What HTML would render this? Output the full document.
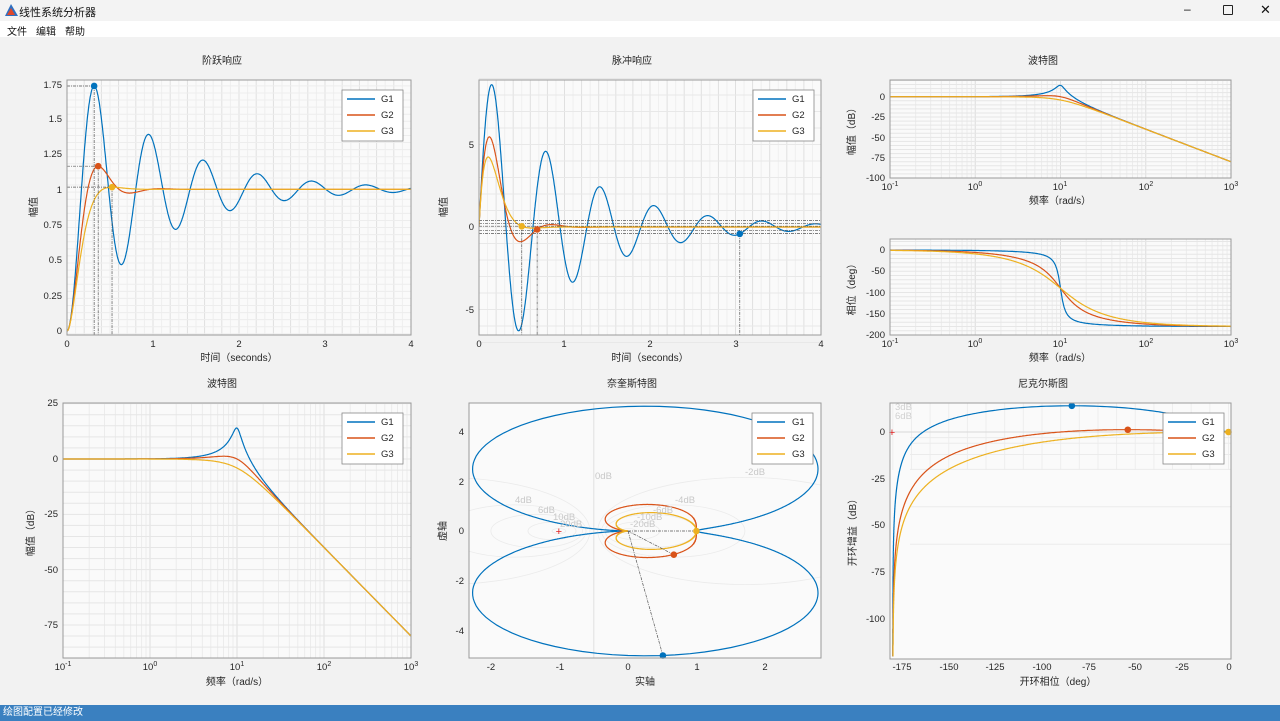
<!DOCTYPE html>
<html><head><meta charset="utf-8">
<style>
html,body{margin:0;padding:0;width:1280px;height:721px;overflow:hidden;background:#f2f2f2;font-family:"Liberation Sans","Noto Sans CJK SC",sans-serif;}
#tb{position:absolute;left:0;top:0;width:1280px;height:21px;background:#f3f3f3;font-size:11px;color:#111;}
#mb{position:absolute;left:0;top:21px;width:1280px;height:16px;background:#fff;font-size:10px;color:#111;}
#sb{position:absolute;left:0;top:705px;width:1280px;height:16px;background:#3a80c0;color:#fff;font-size:10px;line-height:16px;padding-left:3px;box-sizing:border-box;}
svg{position:absolute;left:0;top:0}
text{font-family:"Liberation Sans","Noto Sans CJK SC",sans-serif;fill:#262626;font-size:9.5px}
.r{text-anchor:end}.m{text-anchor:middle}
.t{font-size:10px}
</style></head><body>
<div id="tb">
<svg width="16" height="16" style="left:4px;top:3px"><path d="M7 1 L14 13 L1 13 Z" fill="#2f6fc0"/><path d="M7 5 L11 12 L3 12Z" fill="#e0482a"/></svg>
<span style="position:absolute;left:19px;top:4px">线性系统分析器</span>
<span style="position:absolute;left:1184px;top:2px;font-size:12px">&#8211;</span>
<span style="position:absolute;left:1223px;top:5px;width:8px;height:8px;border:1px solid #222;border-radius:1px"></span>
<span style="position:absolute;left:1260px;top:2px;font-size:13px">&#10005;</span>
</div>
<div id="mb"><span style="position:absolute;left:7px;top:2px">文件</span><span style="position:absolute;left:36px;top:2px">编辑</span><span style="position:absolute;left:65px;top:2px">帮助</span></div>
<div id="sb">绘图配置已经修改</div>

<svg width="1280" height="705" viewBox="0 0 1280 705" style="top:0">
<defs>
<clipPath id="c1"><rect x="67" y="80" width="344" height="255"/></clipPath>
<clipPath id="c2"><rect x="479" y="80" width="342" height="255"/></clipPath>
<clipPath id="c3"><rect x="890" y="80" width="341" height="98"/></clipPath>
<clipPath id="c4"><rect x="890" y="239" width="341" height="96"/></clipPath>
<clipPath id="c5"><rect x="63" y="403" width="348" height="255"/></clipPath>
<clipPath id="c6"><rect x="469" y="403" width="352" height="255"/></clipPath>
<clipPath id="c7"><rect x="890" y="403" width="341" height="256"/></clipPath>
</defs>
<g id="plots"></g>

<text class="m t" x="222" y="64">阶跃响应</text>
<text class="m t" x="632" y="64">脉冲响应</text>
<text class="m t" x="1043" y="64">波特图</text>
<text class="m t" x="222" y="387">波特图</text>
<text class="m t" x="632" y="387">奈奎斯特图</text>
<text class="m t" x="1043" y="387">尼克尔斯图</text>
<text class="m t" x="239" y="361">时间（seconds）</text>
<text class="m t" x="650" y="361">时间（seconds）</text>
<text class="m t" x="1060" y="204">频率（rad/s）</text>
<text class="m t" x="1060" y="361">频率（rad/s）</text>
<text class="m t" x="237" y="685">频率（rad/s）</text>
<text class="m t" x="645" y="685">实轴</text>
<text class="m t" x="1058" y="685">开环相位（deg）</text>
<text class="m t" transform="translate(37,207) rotate(-90)">幅值</text>
<text class="m t" transform="translate(447,207) rotate(-90)">幅值</text>
<text class="m t" transform="translate(855,129) rotate(-90)">幅值（dB）</text>
<text class="m t" transform="translate(855,287) rotate(-90)">相位（deg）</text>
<text class="m t" transform="translate(34,530) rotate(-90)">幅值（dB）</text>
<text class="m t" transform="translate(446,531) rotate(-90)">虚轴</text>
<text class="m t" transform="translate(856,530) rotate(-90)">开环增益（dB）</text>

<text class="r" x="62" y="88">1.75</text><text class="r" x="62" y="122">1.5</text><text class="r" x="62" y="157">1.25</text><text class="r" x="62" y="193">1</text><text class="r" x="62" y="228">0.75</text><text class="r" x="62" y="263">0.5</text><text class="r" x="62" y="299">0.25</text><text class="r" x="62" y="334">0</text>
<text class="m" x="67" y="347">0</text><text class="m" x="153" y="347">1</text><text class="m" x="239" y="347">2</text><text class="m" x="325" y="347">3</text><text class="m" x="411" y="347">4</text>
<text class="r" x="474" y="148">5</text><text class="r" x="474" y="230">0</text><text class="r" x="474" y="313">-5</text>
<text class="m" x="479" y="347">0</text><text class="m" x="564" y="347">1</text><text class="m" x="650" y="347">2</text><text class="m" x="736" y="347">3</text><text class="m" x="821" y="347">4</text>
<text class="r" x="885" y="100">0</text><text class="r" x="885" y="120">-25</text><text class="r" x="885" y="141">-50</text><text class="r" x="885" y="161">-75</text><text class="r" x="885" y="181">-100</text>
<text class="m" x="890" y="190">10<tspan dy="-4" font-size="7">-1</tspan></text><text class="m" x="975" y="190">10<tspan dy="-4" font-size="7">0</tspan></text><text class="m" x="1060" y="190">10<tspan dy="-4" font-size="7">1</tspan></text><text class="m" x="1146" y="190">10<tspan dy="-4" font-size="7">2</tspan></text><text class="m" x="1231" y="190">10<tspan dy="-4" font-size="7">3</tspan></text>
<text class="r" x="885" y="253">0</text><text class="r" x="885" y="274">-50</text><text class="r" x="885" y="296">-100</text><text class="r" x="885" y="317">-150</text><text class="r" x="885" y="338">-200</text>
<text class="m" x="890" y="347">10<tspan dy="-4" font-size="7">-1</tspan></text><text class="m" x="975" y="347">10<tspan dy="-4" font-size="7">0</tspan></text><text class="m" x="1060" y="347">10<tspan dy="-4" font-size="7">1</tspan></text><text class="m" x="1146" y="347">10<tspan dy="-4" font-size="7">2</tspan></text><text class="m" x="1231" y="347">10<tspan dy="-4" font-size="7">3</tspan></text>
<text class="r" x="58" y="406">25</text><text class="r" x="58" y="462">0</text><text class="r" x="58" y="517">-25</text><text class="r" x="58" y="573">-50</text><text class="r" x="58" y="628">-75</text>
<text class="m" x="63" y="670">10<tspan dy="-4" font-size="7">-1</tspan></text><text class="m" x="150" y="670">10<tspan dy="-4" font-size="7">0</tspan></text><text class="m" x="237" y="670">10<tspan dy="-4" font-size="7">1</tspan></text><text class="m" x="324" y="670">10<tspan dy="-4" font-size="7">2</tspan></text><text class="m" x="411" y="670">10<tspan dy="-4" font-size="7">3</tspan></text>
<text class="r" x="464" y="435">4</text><text class="r" x="464" y="485">2</text><text class="r" x="464" y="534">0</text><text class="r" x="464" y="584">-2</text><text class="r" x="464" y="634">-4</text>
<text class="m" x="491" y="670">-2</text><text class="m" x="560" y="670">-1</text><text class="m" x="628" y="670">0</text><text class="m" x="697" y="670">1</text><text class="m" x="765" y="670">2</text>
<text x="595" y="479" style="fill:#c8c8c8">0dB</text><text x="745" y="475" style="fill:#c8c8c8">-2dB</text><text x="515" y="503" style="fill:#c8c8c8">4dB</text><text x="675" y="503" style="fill:#c8c8c8">-4dB</text><text x="538" y="513" style="fill:#c8c8c8">6dB</text><text x="653" y="513" style="fill:#c8c8c8">-6dB</text><text x="553" y="520" style="fill:#c8c8c8">10dB</text><text x="637" y="520" style="fill:#c8c8c8">-10dB</text><text x="560" y="527" style="fill:#c8c8c8">20dB</text><text x="630" y="527" style="fill:#c8c8c8">-20dB</text>
<text class="r" x="885" y="435">0</text><text class="r" x="885" y="482">-25</text><text class="r" x="885" y="528">-50</text><text class="r" x="885" y="575">-75</text><text class="r" x="885" y="622">-100</text>
<text class="m" x="902" y="670">-175</text><text class="m" x="949" y="670">-150</text><text class="m" x="995" y="670">-125</text><text class="m" x="1042" y="670">-100</text><text class="m" x="1089" y="670">-75</text><text class="m" x="1135" y="670">-50</text><text class="m" x="1182" y="670">-25</text><text class="m" x="1229" y="670">0</text>
<text x="895" y="410" style="fill:#d0d0d0">3dB</text><text x="895" y="419" style="fill:#d0d0d0">6dB</text>

<g id="legends"></g>
<text x="381" y="102">G1</text><text x="381" y="118">G2</text><text x="381" y="134">G3</text>
<text x="792" y="102">G1</text><text x="792" y="118">G2</text><text x="792" y="134">G3</text>
<text x="381" y="425">G1</text><text x="381" y="441">G2</text><text x="381" y="457">G3</text>
<text x="792" y="425">G1</text><text x="792" y="441">G2</text><text x="792" y="457">G3</text>
<text x="1202" y="425">G1</text><text x="1202" y="441">G2</text><text x="1202" y="457">G3</text>
</svg>

<script>
var C=['#0072bd','#d95319','#edb120'],Z=[0.1,0.5,0.8],W=10;
var out='';
function box(x,y,w,h){out+='<rect x="'+x+'" y="'+y+'" width="'+w+'" height="'+h+'" fill="#fafafa"/>';}
function frame(x,y,w,h){out+='<rect x="'+x+'" y="'+y+'" width="'+w+'" height="'+h+'" fill="none" stroke="#9a9a9a" stroke-width="1"/>';}
function vl(x,y0,y1,c,w){out+='<line x1="'+x+'" x2="'+x+'" y1="'+y0+'" y2="'+y1+'" stroke="'+c+'" stroke-width="'+(w||1)+'"/>';}
function hl(y,x0,x1,c,w){out+='<line x1="'+x0+'" x2="'+x1+'" y1="'+y+'" y2="'+y+'" stroke="'+c+'" stroke-width="'+(w||1)+'"/>';}
function path(pts,c,clip,w){var d='';pts.forEach(function(p,i){d+=(i?'L':'M')+p[0].toFixed(1)+' '+p[1].toFixed(1)});out+='<path d="'+d+'" fill="none" stroke="'+c+'" stroke-width="'+(w||1.2)+'" clip-path="url(#'+clip+')"/>';}
function dot(x,y,c){out+='<circle cx="'+x+'" cy="'+y+'" r="3.3" fill="'+c+'"/>';}
function dash(x1,y1,x2,y2){out+='<line x1="'+x1+'" y1="'+y1+'" x2="'+x2+'" y2="'+y2+'" stroke="#555" stroke-width="0.7" stroke-dasharray="3,1,1,1"/>';}
function logGrid(x0,x1,y0,y1){var dec=(x1-x0)/4;for(var d=0;d<4;d++)for(var k=1;k<=9;k++){var x=x0+dec*(d+Math.log10(k));vl(x,y0,y1,k==1?'#dddddd':'#ececec');}}
function mag(z,w){var re=1-(w/W)*(w/W),im=2*z*w/W;return [re/(re*re+im*im),-im/(re*re+im*im)];}
box(67,80,344,255);
for(var t=0;t<=4.001;t+=0.1){vl(67+t*86,80,335,Math.abs(t*5-Math.round(t*5))<0.01?'#e0e0e0':'#efefef');}
for(var v=-0.02;v<=1.8;v+=0.05){var y=331-v*141.7;if(y>80&&y<335)hl(y,67,411,Math.abs(v*4-Math.round(v*4))<0.01?'#e2e2e2':'#ededed');}
function stepv(z,t){var wd=W*Math.sqrt(1-z*z);return 1-Math.exp(-z*W*t)/Math.sqrt(1-z*z)*Math.sin(wd*t+Math.acos(z));}
function imp(z,t){var wd=W*Math.sqrt(1-z*z);return W*W/wd*Math.exp(-z*W*t)*Math.sin(wd*t);}
var pk=[];
for(var i=0;i<3;i++){var p=[];for(var t=0;t<=4;t+=0.005)p.push([67+t*86,331-stepv(Z[i],t)*141.7]);var tp=Math.PI/(W*Math.sqrt(1-Z[i]*Z[i]));pk.push([67+tp*86,331-stepv(Z[i],tp)*141.7]);path(p,C[i],'c1');}
pk.forEach(function(q){dash(67,q[1],q[0],q[1]);dash(q[0],q[1],q[0],335);});
pk.forEach(function(q,i){dot(q[0],q[1],C[i]);});
frame(67,80,344,255);
box(479,80,342,255);
for(var t=0;t<=4.001;t+=0.1){vl(479+t*85.5,80,335,Math.abs(t*5-Math.round(t*5))<0.01?'#e0e0e0':'#efefef');}
for(var v=-7;v<=9;v+=1){hl(227-v*16.5,479,821,'#e8e8e8');}
var ip=[[3.05,C[0]],[0.68,C[1]],[0.5,C[2]]];
for(var i=0;i<3;i++){var p=[];for(var t=0;t<=4;t+=0.004)p.push([479+t*85.5,227-imp(Z[i],t)*16.5]);path(p,C[i],'c2');}
[0.4,-0.4,0.2,-0.2,0.05].forEach(function(a){dash(479,227-a*16.5,821,227-a*16.5);});
ip.forEach(function(a,i){var x=479+a[0]*85.5,y=227-imp(Z[i],a[0])*16.5;dash(x,y,x,335);dot(x,y,a[1]);});
frame(479,80,342,255);
function bode(x0,x1,ytop,ybot,y0,ps,clip,ph,yg){box(x0,ytop,x1-x0,ybot-ytop);logGrid(x0,x1,ytop,ybot);yg.forEach(function(g){hl(y0-g*ps,x0,x1,'#e6e6e6');});
for(var i=0;i<3;i++){var p=[];for(var e=-1;e<=3;e+=0.005){var w=Math.pow(10,e),g=mag(Z[i],w),val;if(ph){val=Math.atan2(g[1],g[0])*180/Math.PI;if(val>0)val-=360;}else val=10*Math.log10(g[0]*g[0]+g[1]*g[1]);p.push([x0+(e+1)*(x1-x0)/4,y0-val*ps]);}path(p,C[i],clip);}
frame(x0,ytop,x1-x0,ybot-ytop);}
var g1=[];for(var v=-100;v<=20;v+=5)g1.push(v);
bode(890,1231,80,178,96.7,0.813,'c3',false,g1);
var g2=[];for(var v=-200;v<=20;v+=10)g2.push(v);
bode(890,1231,239,335,250,0.425,'c4',true,g2);
var g3=[];for(var v=-90;v<=25;v+=5)g3.push(v);
bode(63,411,403,658,459,2.213,'c5',false,g3);
box(469,403,352,255);
function NX(x){return 628+x*68.4;}function NY(y){return 531-y*24.9;}
vl(NX(-0.5),403,658,'#e0e0e0');
[2,4,6,10,20,-2,-4,-6,-10,-20].forEach(function(db){var m=Math.pow(10,db/20),c=-m*m/(m*m-1),r=Math.abs(m/(m*m-1));out+='<ellipse cx="'+NX(c)+'" cy="'+NY(0)+'" rx="'+(r*68.4)+'" ry="'+(r*24.9)+'" fill="none" stroke="#ebebeb" stroke-width="0.8" clip-path="url(#c6)"/>';});
for(var i=0;i<3;i++){var p=[],q=[];for(var e=-2;e<=3;e+=0.002){var w=Math.pow(10,e),g=mag(Z[i],w);p.push([NX(g[0]),NY(g[1])]);q.push([NX(g[0]),NY(-g[1])]);}path(p,C[i],'c6');path(q,C[i],'c6');}
out+='<text x="'+(NX(-1)-4)+'" y="'+(NY(0)+4)+'" style="fill:#e02020;font-size:11px">+</text>';
dash(NX(0),NY(0),NX(1),NY(0));dash(NX(0),NY(0),NX(0.51),NY(-5));dash(NX(0),NY(0),NX(0.67),NY(-0.95));
dot(NX(0.51),NY(-5),C[0]);dot(NX(0.67),NY(-0.95),C[1]);dot(NX(1),NY(0),C[2]);
frame(469,403,352,255);
box(890,403,341,256);
function KX(p){return 1228.5+p*1.865;}function KY(d){return 432-d*1.87;}
for(var p=-180;p<=0;p+=10)vl(KX(p),403,470,'#eeeeee');
[0,-3,-6,-12,-20,-40,-60].forEach(function(d){hl(KY(d),910,1231,'#ebebeb');});
hl(KY(0),890,1231,'#d8d8d8');
for(var i=0;i<3;i++){var p=[];for(var e=-2;e<=4;e+=0.002){var w=Math.pow(10,e),g=mag(Z[i],w),ph=Math.atan2(g[1],g[0])*180/Math.PI;if(ph>0)ph-=360;p.push([KX(ph),KY(10*Math.log10(g[0]*g[0]+g[1]*g[1]))]);}path(p,C[i],'c7');}
out+='<text x="'+(KX(-180)-4)+'" y="'+(KY(0)+4)+'" style="fill:#e02020;font-size:11px">+</text>';
dot(KX(-84),KY(14),C[0]);dot(KX(-54),KY(1.2),C[1]);dot(KX(0),KY(0),C[2]);
frame(890,403,341,256);
function leg(x,y){out+='<rect x="'+x+'" y="'+y+'" width="61" height="51" fill="#fff" stroke="#888" stroke-width="0.8"/>';for(var i=0;i<3;i++)hl(y+9+i*16,x+5,x+33,C[i],1.4);}
leg(342,90);leg(753,90);leg(342,413);leg(752,413);leg(1163,413);
document.getElementById('plots').innerHTML=out;
</script>
</body></html>
